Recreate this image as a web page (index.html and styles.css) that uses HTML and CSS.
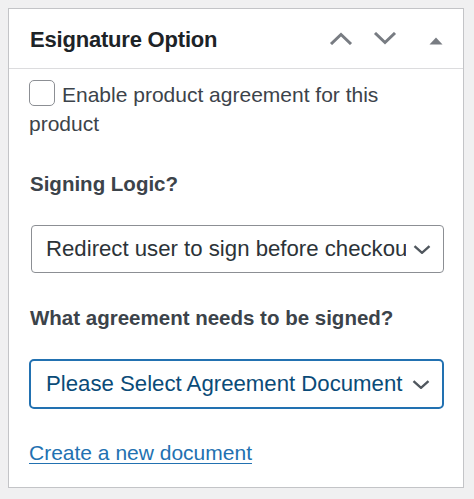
FILE: index.html
```html
<!DOCTYPE html>
<html lang="en">
<head>
<meta charset="utf-8">
<title>Esignature Option</title>
<link rel="stylesheet" href="styles.css">
</head>
<body>
<div class="panel">
  <div class="panel-head">
    <h2 class="panel-title">Esignature Option</h2>
    <div class="head-actions">
      <svg class="icon chev" viewBox="0 0 24 13" width="24" height="13" aria-hidden="true"><path d="M2 12 L12 2.5 L22 12" fill="none" stroke="#787c82" stroke-width="3"/></svg>
      <svg class="icon chev" viewBox="0 0 24 13" width="24" height="13" aria-hidden="true"><path d="M2 1 L12 10.5 L22 1" fill="none" stroke="#787c82" stroke-width="3"/></svg>
      <svg class="icon tri" viewBox="0 0 14 8" width="14" height="8" aria-hidden="true"><path d="M0.5 7.5 L7 0.5 L13.5 7.5 Z" fill="#787c82"/></svg>
    </div>
  </div>
  <div class="panel-body">
    <p class="check-row"><span class="checkbox"></span>Enable product agreement for this product</p>
    <p class="field-label">Signing Logic?</p>
    <div class="select">
      <span class="select-text">Redirect user to sign before checkout</span>
      <svg class="select-arrow" viewBox="0 0 18 9" width="18" height="9" aria-hidden="true"><path d="M1.5 1.2 L9 7.8 L16.5 1.2" fill="none" stroke="#50575e" stroke-width="2.4"/></svg>
    </div>
    <p class="field-label field-label-2">What agreement needs to be signed?</p>
    <div class="select select-focus">
      <span class="select-text">Please Select Agreement Document</span>
      <svg class="select-arrow" viewBox="0 0 18 9" width="18" height="9" aria-hidden="true"><path d="M1.5 1.2 L9 7.8 L16.5 1.2" fill="none" stroke="#50575e" stroke-width="2.4"/></svg>
    </div>
    <p class="link-row"><a class="link" href="#">Create a new document</a></p>
  </div>
</div>
</body>
</html>
```

FILE: styles.css
```css
html, body {
  margin: 0;
  padding: 0;
  background: #f0f0f1;
}
body {
  padding: 8px 10px 0 8px;
  font-family: "Liberation Sans", Arial, sans-serif;
  color: #3c434a;
}
.panel {
  background: #fff;
  border: 1px solid #c3c4c7;
  box-sizing: border-box;
  width: 456px;
  height: 480px;
}
.panel-head {
  height: 59px;
  border-bottom: 1px solid #dcdcde;
  display: flex;
  align-items: center;
  padding: 0 21px;
}
.panel-title {
  margin: 0;
  flex: 1;
  font-size: 22px;
  font-weight: bold;
  color: #1d2327;
  letter-spacing: -0.2px;
  position: relative;
  top: 1px;
}
.head-actions {
  display: flex;
  align-items: center;
  margin-right: -1px;
}
.chev { margin-left: 20px; }
.tri { margin-left: 32px; margin-top: 4px; }
.icon { display: block; }
.panel-body {
  padding: 11px 19px 0 20px;
}
.panel-body p {
  margin: 0;
}
.check-row {
  font-size: 21px;
  line-height: 29px;
}
.checkbox {
  float: left;
  width: 26px;
  height: 26px;
  box-sizing: border-box;
  border: 1px solid #8c8f94;
  border-radius: 5px;
  margin: 0 7px 0 0;
  background: #fff;
}
.panel-body .field-label {
  font-size: 20.5px;
  line-height: 29px;
  font-weight: bold;
  margin: 31px 0 27px;
  padding-left: 1px;
}
.panel-body .field-label-2 {
  margin-top: 30px;
}
.select {
  height: 48px;
  box-sizing: border-box;
  border: 1px solid #8c8f94;
  border-radius: 4px;
  margin-left: 2px;
  display: flex;
  align-items: center;
  padding: 0 12px 0 14px;
  color: #2c3338;
  font-size: 22.2px;
}
.select-text {
  flex: 1;
  white-space: nowrap;
  overflow: hidden;
  margin-right: 7px;
}
.select-arrow {
  display: block;
  flex: none;
}
.select-focus {
  border: 2px solid #2271b1;
  height: 50px;
  border-radius: 5px;
  margin-left: 0;
  color: #0a4b78;
  padding-left: 15px;
}
.panel-body .link-row {
  font-size: 21px;
  line-height: 29px;
  margin-top: 29px;
}
.link {
  color: #2271b1;
  text-decoration: underline;
  text-underline-offset: 3px;
  text-decoration-thickness: 1px;
}
```
